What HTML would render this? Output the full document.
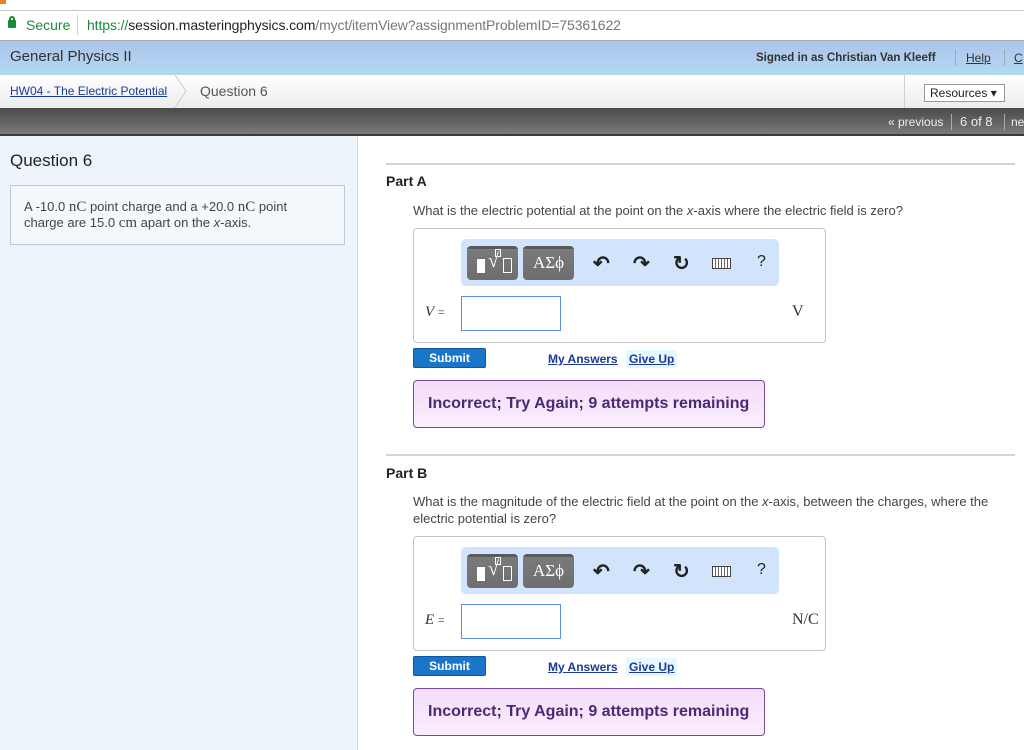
<!DOCTYPE html>
<html><head><meta charset="utf-8"><style>
*{margin:0;padding:0;box-sizing:border-box}
body{width:1024px;height:750px;overflow:hidden;position:relative;font-family:"Liberation Sans",Arial,sans-serif;background:#fff;color:#333}
.a{position:absolute;white-space:nowrap}
.tb{position:absolute;background:#d2e4fb;border-radius:5px;width:318px;height:47px}
.btn{position:absolute;top:7px;width:51px;height:34px;background:linear-gradient(#5a5a5a 0 3px,#7a7a7a 3px,#6e6e6e);border-radius:4px;color:#fff}
.ic{position:absolute;top:12px;font-size:20px;color:#222;font-weight:bold}
.sub{position:absolute;width:73px;height:20px;background:#1a76c9;border:1px solid #10579a;border-radius:2px;color:#fff;font-weight:bold;font-size:12px;text-align:center;line-height:18px}
.lk{position:absolute;font-size:12px;font-weight:bold;color:#1a3a9a;text-decoration:underline}
.inc{position:absolute;width:352px;height:48px;border:1px solid #7a4a9a;border-radius:4px;background:linear-gradient(#f4dcfa,#fbeefe);color:#4a2a72;font-weight:bold;font-size:16px;line-height:46px;padding-left:14px}
.ab{position:absolute;left:413px;width:413px;height:115px;border:1px solid #c4c4c4;border-radius:4px}
.inp{position:absolute;width:100px;height:35px;border:1px solid #5b8fe0}
.serif{font-family:"Liberation Serif",serif}
</style></head><body>
<div class="a" style="left:0;top:0;width:6px;height:4px;background:#e8822a"></div>
<div class="a" style="left:0;top:10px;width:1024px;height:1px;background:#c8c8c8"></div>
<div class="a" style="left:8px;top:20px;width:8px;height:8px;background:#1a8a3a;border-radius:1px"></div>
<div class="a" style="left:9px;top:16px;width:6px;height:6px;border:2px solid #1a8a3a;border-bottom:none;border-radius:3px 3px 0 0"></div>
<div class="a" style="left:26px;top:17px;font-size:14px;color:#1a8a3a">Secure</div>
<div class="a" style="left:77px;top:15px;width:1px;height:20px;background:#ccc"></div>
<div class="a" style="left:87px;top:17px;font-size:14px;letter-spacing:-0.1px;color:#777"><span style="color:#1a8a3a">https://</span><span style="color:#222">session.masteringphysics.com</span>/myct/itemView?assignmentProblemID=75361622</div>
<div class="a" style="left:0;top:40px;width:1024px;height:35px;background:linear-gradient(#aec3ec,#b2d9f0);border-top:1px solid #aab"></div>
<div class="a" style="left:10px;top:48px;font-size:15px;color:#333">General Physics II</div>
<div class="a" style="left:756px;top:52px;font-size:11.5px;font-weight:bold;color:#333">Signed in as Christian Van Kleeff</div>
<div class="a" style="left:955px;top:50px;width:1px;height:16px;background:#9ab"></div>
<div class="a" style="left:966px;top:51px;font-size:12px;color:#333;text-decoration:underline">Help</div>
<div class="a" style="left:1004px;top:50px;width:1px;height:16px;background:#9ab"></div>
<div class="a" style="left:1014px;top:51px;font-size:12px;color:#333;text-decoration:underline">C</div>
<div class="a" style="left:0;top:75px;width:1024px;height:33px;background:linear-gradient(#fff,#ececec)"></div>
<div class="a" style="left:10px;top:84px;font-size:12px;color:#1a3a9a;text-decoration:underline">HW04 - The Electric Potential</div>
<svg class="a" style="left:174px;top:75px" width="14" height="33"><path d="M1 0 L12 16 L1 33" fill="none" stroke="#ccc"/></svg>
<div class="a" style="left:200px;top:83px;font-size:14px;color:#555">Question 6</div>
<div class="a" style="left:904px;top:75px;width:1px;height:33px;background:#d0d0d0"></div>
<div class="a" style="left:924px;top:84px;width:81px;height:18px;border:1px solid #999;background:#fff;font-size:12px;line-height:16px;padding-left:5px;color:#222">Resources ▾</div>
<div class="a" style="left:0;top:108px;width:1024px;height:28px;background:linear-gradient(#4a4a4a,#7a7a7a);border-bottom:2px solid #3a3a3a"></div>
<div class="a" style="left:888px;top:115px;font-size:12px;color:#eee">« previous</div>
<div class="a" style="left:951px;top:114px;width:1px;height:16px;background:#aaa"></div>
<div class="a" style="left:960px;top:114px;font-size:13px;color:#eee">6 of 8</div>
<div class="a" style="left:1004px;top:114px;width:1px;height:16px;background:#aaa"></div>
<div class="a" style="left:1011px;top:115px;font-size:12px;color:#eee">ne</div>
<div class="a" style="left:0;top:136px;width:358px;height:614px;background:#eef4fc;border-right:1px solid #d6dde6"></div>
<div class="a" style="left:10px;top:151px;font-size:17px;color:#222">Question 6</div>
<div class="a" style="left:10px;top:185px;width:335px;height:60px;border:1px solid #b8cadb;background:#f4f8fd"></div>
<div class="a" style="left:24px;top:199px;font-size:13px;color:#444;line-height:16px">A -10.0 <span class="serif" style="font-size:15px">nC</span> point charge and a +20.0 <span class="serif" style="font-size:15px">nC</span> point<br>charge are 15.0 <span class="serif" style="font-size:15px">cm</span> apart on the <i>x</i>-axis.</div>

<!-- Part A -->
<div class="a" style="left:386px;top:163px;width:629px;height:2px;background:#d4d4d4"></div>
<div class="a" style="left:386px;top:173px;font-size:14px;font-weight:bold;color:#222">Part A</div>
<div class="a" style="left:413px;top:203px;font-size:13px;color:#444">What is the electric potential at the point on the <i>x</i>-axis where the electric field is zero?</div>
<div class="ab" style="top:228px"></div>
<div class="tb" style="left:461px;top:239px">
<div class="btn" style="left:6px"><div class="a" style="left:10px;top:13px;width:8px;height:14px;background:#fff"></div><div class="a serif" style="left:21px;top:4px;font-size:20px">√</div><div class="a" style="left:28px;top:3px;width:6px;height:8px;border:1px solid #fff"></div><div class="a" style="left:36px;top:12px;width:9px;height:15px;border:1px solid #fff"></div></div>
<div class="btn serif" style="left:62px;font-size:17px;text-align:center;line-height:34px">ΑΣϕ</div>
<div class="ic" style="left:132px">↶</div><div class="ic" style="left:172px">↷</div><div class="ic" style="left:212px">↻</div>
<div class="a" style="left:251px;top:19px;width:19px;height:11px;border:1px solid #444;background:repeating-linear-gradient(90deg,#fff 0 2px,#666 2px 3px)"></div>
<div class="ic" style="left:296px;font-size:16px;top:14px;font-weight:normal">?</div>
</div>
<div class="a serif" style="left:425px;top:304px;font-size:15px"><i>V</i> <span style="font-size:12px">=</span></div>
<div class="inp" style="left:461px;top:296px"></div>
<div class="a serif" style="left:792px;top:303px;font-size:16px">V</div>
<div class="sub" style="left:413px;top:348px">Submit</div>
<div class="lk" style="left:548px;top:352px">My Answers</div>
<div class="lk" style="left:626px;top:350px;background:#e5f7ff;padding:2px 3px">Give Up</div>
<div class="inc" style="left:413px;top:380px">Incorrect; Try Again; 9 attempts remaining</div>

<!-- Part B -->
<div class="a" style="left:386px;top:454px;width:629px;height:2px;background:#d4d4d4"></div>
<div class="a" style="left:386px;top:465px;font-size:14px;font-weight:bold;color:#222">Part B</div>
<div class="a" style="left:413px;top:493px;font-size:13px;color:#444;line-height:17px">What is the magnitude of the electric field at the point on the <i>x</i>-axis, between the charges, where the<br>electric potential is zero?</div>
<div class="ab" style="top:536px"></div>
<div class="tb" style="left:461px;top:547px">
<div class="btn" style="left:6px"><div class="a" style="left:10px;top:13px;width:8px;height:14px;background:#fff"></div><div class="a serif" style="left:21px;top:4px;font-size:20px">√</div><div class="a" style="left:28px;top:3px;width:6px;height:8px;border:1px solid #fff"></div><div class="a" style="left:36px;top:12px;width:9px;height:15px;border:1px solid #fff"></div></div>
<div class="btn serif" style="left:62px;font-size:17px;text-align:center;line-height:34px">ΑΣϕ</div>
<div class="ic" style="left:132px">↶</div><div class="ic" style="left:172px">↷</div><div class="ic" style="left:212px">↻</div>
<div class="a" style="left:251px;top:19px;width:19px;height:11px;border:1px solid #444;background:repeating-linear-gradient(90deg,#fff 0 2px,#666 2px 3px)"></div>
<div class="ic" style="left:296px;font-size:16px;top:14px;font-weight:normal">?</div>
</div>
<div class="a serif" style="left:425px;top:612px;font-size:15px"><i>E</i> <span style="font-size:12px">=</span></div>
<div class="inp" style="left:461px;top:604px"></div>
<div class="a serif" style="left:792px;top:611px;font-size:16px">N/C</div>
<div class="sub" style="left:413px;top:656px">Submit</div>
<div class="lk" style="left:548px;top:660px">My Answers</div>
<div class="lk" style="left:626px;top:658px;background:#e5f7ff;padding:2px 3px">Give Up</div>
<div class="inc" style="left:413px;top:688px">Incorrect; Try Again; 9 attempts remaining</div>
</body></html>
